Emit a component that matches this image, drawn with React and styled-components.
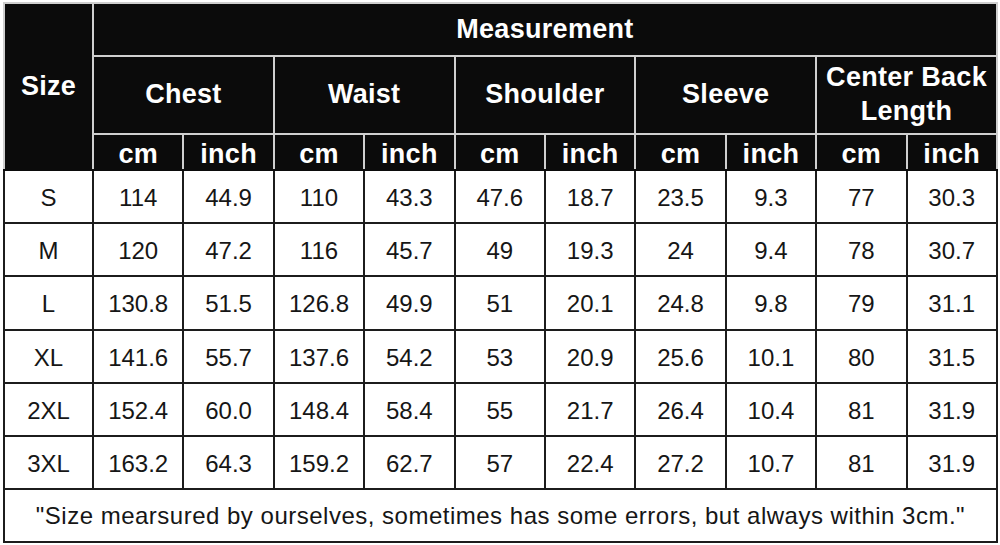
import React from 'react';
import styled, { createGlobalStyle } from 'styled-components';

const GlobalStyle = createGlobalStyle`
  html, body {
    margin: 0;
    padding: 0;
    background: #ffffff;
  }
  body {
    font-family: "Liberation Sans", Arial, sans-serif;
  }
`;

const SheetWrapper = styled.div`
  width: 1000px;
  height: 545px;
  padding: 2px 0 0 3px;
  box-sizing: border-box;
  background: #ffffff;
  overflow: hidden;
`;

const SizeTable = styled.table`
  width: 993px;
  border-collapse: collapse;
  table-layout: fixed;
  color: #161616;
`;

const HeadCell = styled.th`
  background: #0b0b0b;
  color: #ffffff;
  font-size: 27px;
  font-weight: bold;
  letter-spacing: 0.3px;
  line-height: ${(p) => (p.$unit ? 1 : 1.25)};
  text-align: center;
  vertical-align: middle;
  padding: ${(p) => (p.$unit ? '4px 0 0' : '0')};
  border: 2px solid #cfcfcf;
  border-bottom-color: ${(p) => (p.$last ? '#0b0b0b' : '#cfcfcf')};
  height: ${(p) => p.$h}px;
`;

const BodyRow = styled.tr`
  height: 53.2px;
`;

const BodyCell = styled.td`
  font-size: 24px;
  text-align: center;
  vertical-align: middle;
  padding: 3px 0 0;
  border: 2px solid #1c1c1c;
`;

const NoteCell = styled(BodyCell)`
  height: 50px;
  padding: 1px 0 0;
  letter-spacing: 0.5px;
`;

const categories = ['Chest', 'Waist', 'Shoulder', 'Sleeve'];

const rows = [
  ['S', '114', '44.9', '110', '43.3', '47.6', '18.7', '23.5', '9.3', '77', '30.3'],
  ['M', '120', '47.2', '116', '45.7', '49', '19.3', '24', '9.4', '78', '30.7'],
  ['L', '130.8', '51.5', '126.8', '49.9', '51', '20.1', '24.8', '9.8', '79', '31.1'],
  ['XL', '141.6', '55.7', '137.6', '54.2', '53', '20.9', '25.6', '10.1', '80', '31.5'],
  ['2XL', '152.4', '60.0', '148.4', '58.4', '55', '21.7', '26.4', '10.4', '81', '31.9'],
  ['3XL', '163.2', '64.3', '159.2', '62.7', '57', '22.4', '27.2', '10.7', '81', '31.9'],
];

export default function App() {
  return (
    <>
      <GlobalStyle />
      <SheetWrapper>
        <SizeTable>
          <colgroup>
            <col style={{ width: 89 }} />
            {Array.from({ length: 10 }).map((_, i) => (
              <col key={i} style={{ width: 90.4 }} />
            ))}
          </colgroup>
          <thead>
            <tr>
              <HeadCell rowSpan={3} $last>
                Size
              </HeadCell>
              <HeadCell colSpan={10} $h={51}>
                Measurement
              </HeadCell>
            </tr>
            <tr>
              {categories.map((c) => (
                <HeadCell key={c} colSpan={2} $h={76}>
                  {c}
                </HeadCell>
              ))}
              <HeadCell colSpan={2} $h={76}>
                Center Back
                <br />
                Length
              </HeadCell>
            </tr>
            <tr>
              {Array.from({ length: 5 }).flatMap((_, i) => [
                <HeadCell key={`cm${i}`} $h={30} $last $unit>
                  cm
                </HeadCell>,
                <HeadCell key={`in${i}`} $h={30} $last $unit>
                  inch
                </HeadCell>,
              ])}
            </tr>
          </thead>
          <tbody>
            {rows.map((r) => (
              <BodyRow key={r[0]}>
                {r.map((v, i) => (
                  <BodyCell key={i}>{v}</BodyCell>
                ))}
              </BodyRow>
            ))}
            <tr>
              <NoteCell colSpan={11}>
                "Size mearsured by ourselves, sometimes has some errors, but always within 3cm."
              </NoteCell>
            </tr>
          </tbody>
        </SizeTable>
      </SheetWrapper>
    </>
  );
}
